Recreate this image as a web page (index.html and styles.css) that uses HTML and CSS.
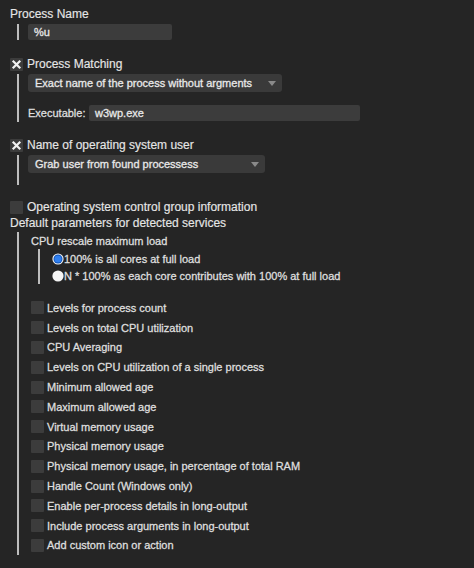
FILE: index.html
```html
<!DOCTYPE html>
<html lang="en">
<head>
    <meta charset="UTF-8">
    <title>Process discovery</title>
    <link rel="stylesheet" href="styles.css">
</head>
<body>
    <div class="form">
        <div class="heading">Process Name</div>
        <div class="sub sub-name">
            <div class="input input-name">%u</div>
        </div>

        <div class="heading check-heading gap-1">
            <span class="box box-x"><svg width="13" height="13" viewBox="0 0 13 13"><path d="M3.5 3.5 L9.5 9.5 M9.5 3.5 L3.5 9.5" stroke="#f2f2f2" stroke-width="2.2" stroke-linecap="square"/></svg></span>
            Process Matching
        </div>
        <div class="sub sub-match">
            <div class="select select-match">Exact name of the process without argments<span class="arrow"></span></div>
            <div class="field-row">
                <span class="field-label">Executable:</span>
                <div class="input input-exe">w3wp.exe</div>
            </div>
        </div>

        <div class="heading check-heading gap-2">
            <span class="box box-x"><svg width="13" height="13" viewBox="0 0 13 13"><path d="M3.5 3.5 L9.5 9.5 M9.5 3.5 L3.5 9.5" stroke="#f2f2f2" stroke-width="2.2" stroke-linecap="square"/></svg></span>
            Name of operating system user
        </div>
        <div class="sub sub-user">
            <div class="select select-user">Grab user from found processess<span class="arrow"></span></div>
        </div>

        <div class="heading check-heading gap-3">
            <span class="box"></span>
            Operating system control group information
        </div>
        <div class="heading">Default parameters for detected services</div>

        <div class="sub sub-defaults">
            <div class="group-title">CPU rescale maximum load</div>
            <div class="sub sub-radio">
                <div class="radio-row">
                    <svg class="radio" width="12" height="12" viewBox="0 0 12 12"><circle cx="6" cy="6" r="5.6" fill="#f4f4f4"/><circle cx="6" cy="6" r="4.5" fill="#0d4fb0"/><circle cx="6" cy="6" r="3.6" fill="#2f7ff0"/></svg>100% is all cores at full load
                </div>
                <div class="radio-row">
                    <svg class="radio" width="12" height="12" viewBox="0 0 12 12"><circle cx="6" cy="6" r="5.6" fill="#f4f4f4"/></svg>N * 100% as each core contributes with 100% at full load
                </div>
            </div>

            <ul class="options">
                <li><span class="box"></span>Levels for process count</li>
                <li><span class="box"></span>Levels on total CPU utilization</li>
                <li><span class="box"></span>CPU Averaging</li>
                <li><span class="box"></span>Levels on CPU utilization of a single process</li>
                <li><span class="box"></span>Minimum allowed age</li>
                <li><span class="box"></span>Maximum allowed age</li>
                <li><span class="box"></span>Virtual memory usage</li>
                <li><span class="box"></span>Physical memory usage</li>
                <li><span class="box"></span>Physical memory usage, in percentage of total RAM</li>
                <li><span class="box"></span>Handle Count (Windows only)</li>
                <li><span class="box"></span>Enable per-process details in long-output</li>
                <li><span class="box"></span>Include process arguments in long-output</li>
                <li><span class="box"></span>Add custom icon or action</li>
            </ul>
        </div>
    </div>
</body>
</html>
```

FILE: styles.css
```css
* {
    margin: 0;
    padding: 0;
    box-sizing: border-box;
}

body {
    background: #252525;
    color: #dedede;
    font-family: 'Liberation Sans', Arial, sans-serif;
    font-size: 11px;
    -webkit-text-stroke: 0.3px;
}

.form {
    padding: 7px 10px 0 10px;
}

.heading {
    font-size: 12px;
    line-height: 15px;
    height: 15px;
    color: #e6e6e6;
    -webkit-text-stroke: 0.15px;
}

.check-heading {
    display: flex;
    align-items: center;
}

.gap-1 {
    margin-top: 17px;
}

.gap-2 {
    margin-top: 16px;
}

.gap-3 {
    margin-top: 15px;
    margin-bottom: 1px;
}

.box {
    display: inline-block;
    width: 13px;
    height: 13px;
    background: #3c3c3c;
    border-radius: 1px;
    margin-right: 4px;
    flex-shrink: 0;
}

.box-x svg {
    display: block;
}

/* indented block with the grey rule on its left */
.sub {
    border-left: 2px solid #bdbdbd;
    margin-left: 7px;
    padding-left: 9px;
}

.sub-name {
    margin-top: 2px;
}

.sub-match {
    margin-top: 2px;
    padding-bottom: 1px;
}

.sub-user {
    margin-top: 2px;
    padding-bottom: 12px;
}

.input {
    background: #3c3c3c;
    border-radius: 2px;
    height: 16px;
    line-height: 16px;
    padding-left: 6px;
    color: #e8e8e8;
}

.input-name {
    width: 144px;
}

.select {
    position: relative;
    background: #3a3a3a;
    border-radius: 3px;
    height: 18px;
    line-height: 18px;
    padding-left: 7px;
    color: #e8e8e8;
}

.select-match {
    width: 254px;
}

.select-user {
    width: 237px;
}

.arrow {
    position: absolute;
    right: 6px;
    top: 7px;
    width: 0;
    height: 0;
    border-left: 4px solid transparent;
    border-right: 4px solid transparent;
    border-top: 5px solid #8a8a8a;
}

.field-row {
    display: flex;
    align-items: center;
    margin-top: 13px;
}

.field-label {
    width: 61px;
}

.input-exe {
    width: 271px;
}

.sub-defaults {
    margin-top: 1px;
    padding-left: 12px;
    padding-top: 2px;
}

.group-title {
    line-height: 15px;
}

.sub-radio {
    margin-left: 7px;
    padding-left: 12px;
    padding-top: 1px;
}

.radio-row {
    display: flex;
    align-items: center;
    height: 17px;
}

.options {
    list-style: none;
    margin-top: 14px;
}

.options li {
    display: flex;
    align-items: center;
    height: 19.8px;
}

.options .box {
    margin-right: 3px;
}
```
